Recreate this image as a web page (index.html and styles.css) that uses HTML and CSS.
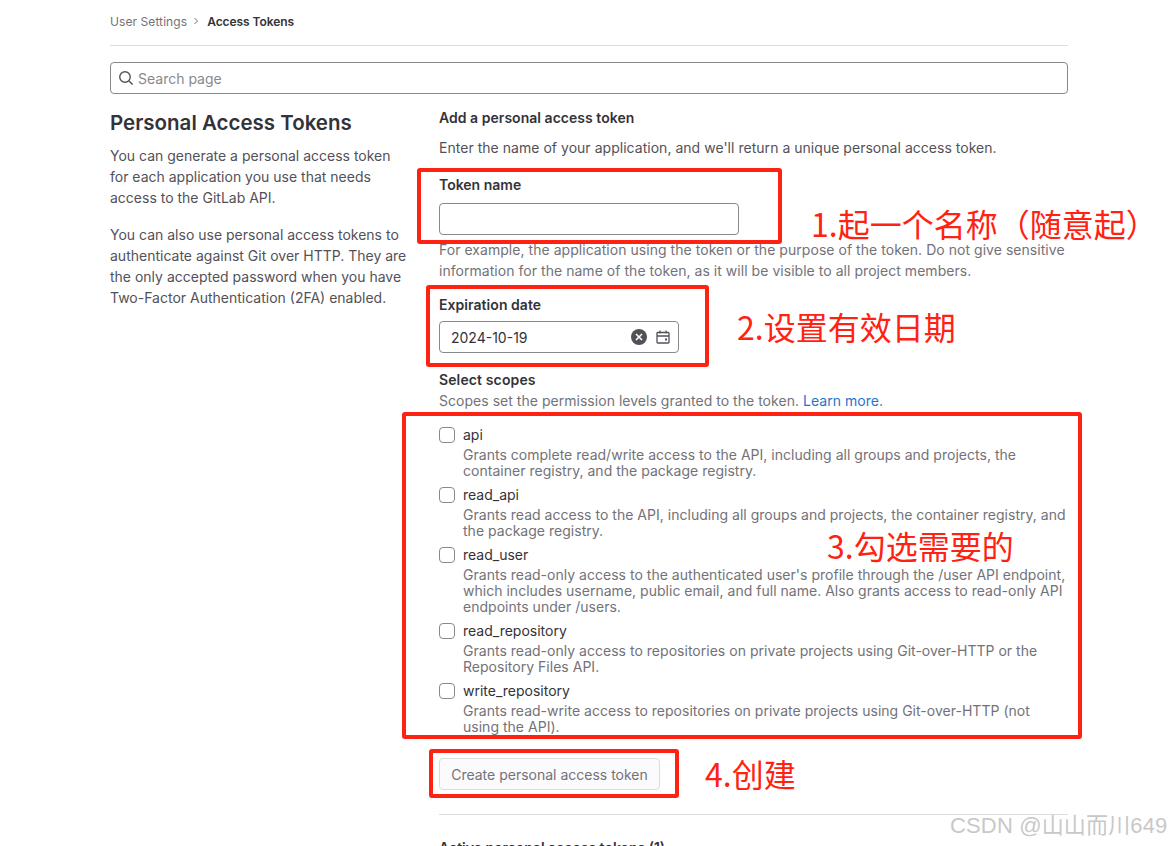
FILE: index.html
```html
<!DOCTYPE html>
<html lang="en">
<head>
<meta charset="utf-8">
<title>Access Tokens</title>
<link rel="stylesheet" href="styles.css">
</head>
<body>
<div class="page">
  <nav class="crumbs">
    <span class="crumb">User Settings</span>
    <svg class="chev" viewBox="0 0 8 8" width="8" height="8"><path d="M2.5 1l3 3-3 3" fill="none" stroke="#737278" stroke-width="1"/></svg>
    <span class="crumb-now">Access Tokens</span>
  </nav>
  <div class="search">
    <svg class="search-icon" viewBox="0 0 16 16" width="16" height="16"><circle cx="7" cy="7" r="5.25" fill="none" stroke="#535158" stroke-width="1.4"/><path d="M11 11l3.6 3.6" stroke="#535158" stroke-width="1.4" fill="none"/></svg>
    <span class="search-text">Search page</span>
  </div>
  <div class="columns">
    <aside class="side">
      <h1 class="title">Personal Access Tokens</h1>
      <p class="side-p">You can generate a personal access token<br>for each application you use that needs<br>access to the GitLab API.</p>
      <p class="side-p">You can also use personal access tokens to<br>authenticate against Git over HTTP. They are<br>the only accepted password when you have<br>Two-Factor Authentication (2FA) enabled.</p>
    </aside>
    <main class="main">
      <h2 class="add">Add a personal access token</h2>
      <p class="intro">Enter the name of your application, and we'll return a unique personal access token.</p>
      <label class="label">Token name</label>
      <div class="input name-input"></div>
      <p class="help">For example, the application using the token or the purpose of the token. Do not give sensitive<br>information for the name of the token, as it will be visible to all project members.</p>
      <label class="label date-label">Expiration date</label>
      <div class="input date-input">
        <span class="date-val">2024-10-19</span>
        <svg class="clear" viewBox="0 0 16 16" width="16" height="16"><circle cx="8" cy="8" r="8" fill="#535158"/><path d="M5 5l6 6M11 5l-6 6" stroke="#fff" stroke-width="1.6"/></svg>
        <svg class="cal" viewBox="0 0 16 16" width="16" height="16"><path d="M2.75 3.5h10.5a.75.75 0 0 1 .75.75v9a.75.75 0 0 1-.75.75H2.75a.75.75 0 0 1-.75-.75v-9a.75.75 0 0 1 .75-.75zM2 7h12M5 1.5v3M11 1.5v3" fill="none" stroke="#535158" stroke-width="1.3"/><rect x="10" y="9.5" width="2" height="2" fill="#535158"/></svg>
      </div>
      <h3 class="label scopes-label">Select scopes</h3>
      <p class="scopes-help">Scopes set the permission levels granted to the token. <a class="link">Learn more.</a></p>
      <ul class="scopes">
        <li class="scope"><span class="box"></span><div><div class="scope-name">api</div><div class="scope-desc">Grants complete read/write access to the API, including all groups and projects, the<br>container registry, and the package registry.</div></div></li>
        <li class="scope"><span class="box"></span><div><div class="scope-name">read_api</div><div class="scope-desc">Grants read access to the API, including all groups and projects, the container registry, and<br>the package registry.</div></div></li>
        <li class="scope"><span class="box"></span><div><div class="scope-name">read_user</div><div class="scope-desc">Grants read-only access to the authenticated user's profile through the /user API endpoint,<br>which includes username, public email, and full name. Also grants access to read-only API<br>endpoints under /users.</div></div></li>
        <li class="scope"><span class="box"></span><div><div class="scope-name">read_repository</div><div class="scope-desc">Grants read-only access to repositories on private projects using Git-over-HTTP or the<br>Repository Files API.</div></div></li>
        <li class="scope"><span class="box"></span><div><div class="scope-name">write_repository</div><div class="scope-desc">Grants read-write access to repositories on private projects using Git-over-HTTP (not<br>using the API).</div></div></li>
      </ul>
      <button class="create" type="button">Create personal access token</button>
      <div class="rule"></div>
      <h2 class="active">Active personal access tokens (1)</h2>
    </main>
  </div>
</div>

<div class="mark m1"></div>
<div class="mark m2"></div>
<div class="mark m3"></div>
<div class="mark m4"></div>
<div class="note n1">1.起一个名称（随意起）</div>
<div class="note n2">2.设置有效日期</div>
<div class="note n3">3.勾选需要的</div>
<div class="note n4">4.创建</div>
<div class="wm">CSDN @山山而川649</div>
</body>
</html>
```
FILE: styles.css
```css
* { box-sizing: border-box; }
html, body { margin: 0; height: 846px; overflow: hidden; background: #fff; }
body { position: relative; font-family: Inter, "Noto Sans CJK SC", sans-serif; font-size: 14px; color: #333238; }
.page { width: 958px; margin-left: 110px; }
.crumbs { height: 46px; display: flex; align-items: center; gap: 5px; padding-bottom: 3px; border-bottom: 1px solid #dcdcde; font-size: 12px; }
.crumb { color: #737278; letter-spacing: .08px; }
.chev { margin: 0 2px 0 0; }
.crumb-now { color: #333238; font-weight: 600; letter-spacing: -.06px; }
.search { height: 32px; margin-top: 16px; display: flex; align-items: center; gap: 4px; padding-left: 7px; border: 1px solid #89888d; border-radius: 4px; }
.search-text { color: #89888d; }
.columns { display: flex; }
.side { width: 329px; flex: none; }
.title { margin: 16px 0 0; font-size: 20.5px; line-height: 26px; font-weight: 600; }
.side-p { margin: 12px 0 16px; line-height: 21px; color: #535158; }
.title + .side-p { margin-top: 9px; }
.main { flex: 1; }
.add { margin: 14px 0 0; font-size: 14px; line-height: 20px; font-weight: 600; letter-spacing: .03px; }
.intro { margin: 10px 0 0; line-height: 20px; color: #535158; letter-spacing: .03px; }
.label { display: block; margin: 17px 0 0; font-size: 14px; line-height: 20px; font-weight: 600; }
.input { border: 1px solid #89888d; border-radius: 4px; height: 32px; background: #fff; }
.name-input { width: 300px; margin-top: 8px; }
.help { margin: 4px 0 0; line-height: 21px; color: #737278; letter-spacing: .04px; }
.date-label { margin-top: 14px; letter-spacing: .05px; }
.date-input { width: 240px; margin-top: 6px; display: flex; align-items: center; padding: 0 7px 0 11px; }
.date-val { flex: 1; color: #333238; }
.clear { margin-right: 8px; }
.scopes-label { margin-top: 17px; letter-spacing: .12px; }
.scopes-help { margin: 1px 0 0; line-height: 20px; color: #737278; letter-spacing: .03px; }
.link { color: #1f75cb; }
.scopes { list-style: none; margin: 14px 0 0; padding: 0; }
.scope { display: flex; gap: 8px; }
.box { width: 16px; height: 16px; flex: none; margin-top: 2px; border: 1px solid #89888d; border-radius: 4px; background: #fff; }
.scope-name { line-height: 20px; color: #333238; }
.scope-desc { margin: 2px 0 6px; line-height: 16px; color: #737278; letter-spacing: .02px; }
.create { display: block; width: 221px; height: 32px; margin-top: 17px; padding: 0; border: 1px solid #dcdcde; border-radius: 4px; background: #fbfafd; color: #737278; font: 14px Inter, sans-serif; }
.rule { height: 1px; margin-top: 24px; background: #dcdcde; }
.active { margin: 23px 0 0; font-size: 14px; line-height: 20px; font-weight: 600; }
.mark { position: absolute; border: 4px solid #ff2212; border-radius: 3px; }
.m1 { left: 417px; top: 168px; width: 365px; height: 76px; }
.m2 { left: 426px; top: 285px; width: 283px; height: 82px; }
.m3 { left: 402px; top: 412px; width: 680px; height: 327px; }
.m4 { left: 429px; top: 749px; width: 250px; height: 49px; }
.note { position: absolute; color: #ff2212; font-family: "Noto Sans CJK SC", sans-serif; font-size: 32px; line-height: 32px; white-space: nowrap; }
.n1 { left: 811px; top: 207px; }
.n2 { left: 737px; top: 310px; }
.n3 { left: 827px; top: 529px; }
.n4 { left: 705px; top: 757px; }
.wm { position: absolute; left: 950px; top: 812px; color: #c8c8c8; font-family: "Liberation Sans", "Noto Sans CJK SC", sans-serif; font-size: 22px; line-height: 28px; letter-spacing: .15px; white-space: nowrap; }
```
